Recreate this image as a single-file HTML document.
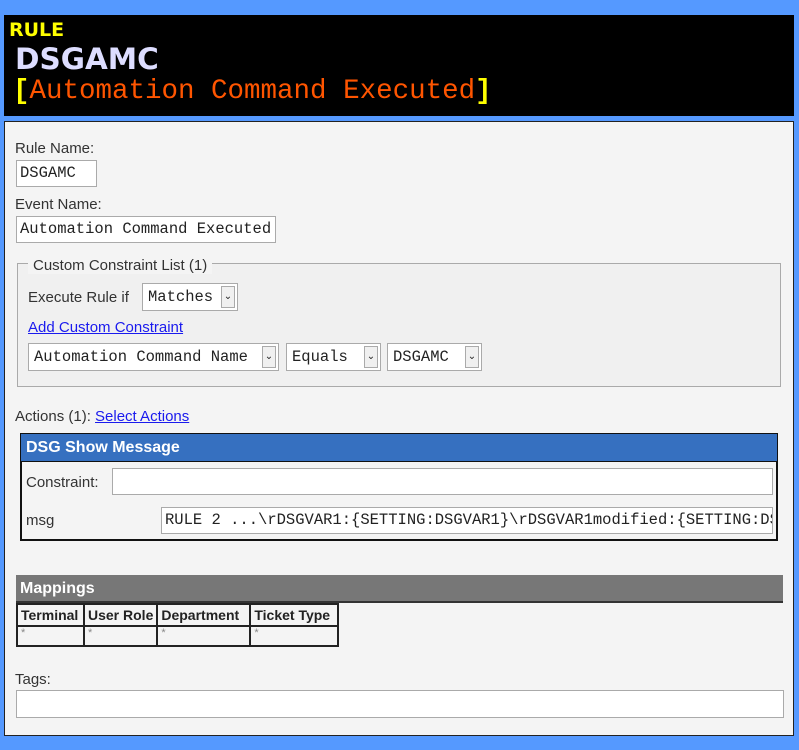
<!DOCTYPE html>
<html><head><style>
*{box-sizing:border-box;margin:0;padding:0}
body{width:799px;height:750px;background:#5599ff;position:relative;font-family:"Liberation Sans",sans-serif;color:#222;overflow:hidden}
.a{position:absolute}
.hdr{left:4px;top:15px;width:790px;height:101px;background:#000}
.pan{left:4px;top:121px;width:790px;height:615px;background:#f4f4f4;border:1px solid #222}
.lbl{font-size:15px;color:#333}
.in{background:#fff;border:1px solid #aaa;font-family:"Liberation Mono",monospace;font-size:15.5px;padding-left:3px;line-height:25px;white-space:nowrap;overflow:hidden;color:#222}
.sel{background:#fff;border:1px solid #aaa;font-family:"Liberation Mono",monospace;font-size:15.5px;padding-left:5px;line-height:26px;color:#222}
.sel i{position:absolute;right:2px;top:2px;width:14px;height:22px;border:1px solid #aaa;background:#f0f0f0;font-style:normal;font-family:"DejaVu Sans";font-size:10px;text-align:center;line-height:20px}
a{color:#1a1aee;text-decoration:underline}
td,th{border:2px solid #222;font-size:14px;padding:0 3px;height:22px;text-align:left;white-space:nowrap}
th{font-weight:bold}
td{color:#888;font-size:11px;height:20px;vertical-align:top}
</style></head><body>
<div class="a hdr"></div>
<div class="a" style="left:9px;top:19px;color:#ffff00;font-weight:bold;font-size:19px;font-family:'DejaVu Sans',sans-serif">RULE</div>
<div class="a" style="left:15px;top:42px;color:#ddddff;font-weight:bold;font-size:29.5px;font-family:'DejaVu Sans',sans-serif">DSGAMC</div>
<div class="a" style="left:13px;top:76px;font-family:'Liberation Mono',monospace;font-size:27.5px;color:#ff5500;white-space:nowrap"><b style="color:#ffff00">[</b>Automation Command Executed<b style="color:#ffff00">]</b></div>
<div class="a pan"></div>
<div class="a lbl" style="left:15px;top:140px">Rule Name:</div>
<div class="a in" style="left:16px;top:160px;width:81px;height:27px">DSGAMC</div>
<div class="a lbl" style="left:15px;top:196px">Event Name:</div>
<div class="a in" style="left:16px;top:216px;width:260px;height:27px">Automation Command Executed</div>
<div class="a" style="left:17px;top:263px;width:764px;height:124px;border:1px solid #aaa;background:#f0f0f0"></div>
<div class="a lbl" style="left:28px;top:257px;background:#f4f4f4;padding:0 5px">Custom Constraint List (1)</div>
<div class="a lbl" style="left:28px;top:289px">Execute Rule if</div>
<div class="a sel" style="left:142px;top:283px;width:96px;height:28px">Matches<i>&#8964;</i></div>
<div class="a lbl" style="left:28px;top:319px"><a>Add Custom Constraint</a></div>
<div class="a sel" style="left:28px;top:343px;width:251px;height:28px">Automation Command Name<i>&#8964;</i></div>
<div class="a sel" style="left:286px;top:343px;width:95px;height:28px">Equals<i>&#8964;</i></div>
<div class="a sel" style="left:387px;top:343px;width:95px;height:28px">DSGAMC<i>&#8964;</i></div>
<div class="a lbl" style="left:15px;top:408px">Actions (1): <a>Select Actions</a></div>
<div class="a" style="left:20px;top:433px;width:758px;height:108px;border:2px solid #111;background:#f4f4f4"></div>
<div class="a" style="left:21px;top:434px;width:756px;height:28px;background:#3670c0;border-bottom:1px solid #111;color:#fff;font-weight:bold;font-size:16px;padding:5px 0 0 5px">DSG Show Message</div>
<div class="a lbl" style="left:26px;top:474px">Constraint:</div>
<div class="a in" style="left:112px;top:468px;width:661px;height:27px"></div>
<div class="a lbl" style="left:26px;top:512px">msg</div>
<div class="a in" style="left:161px;top:507px;width:612px;height:27px">RULE 2 ...\rDSGVAR1:{SETTING:DSGVAR1}\rDSGVAR1modified:{SETTING:DSGVAR1}</div>
<div class="a" style="left:16px;top:575px;width:767px;height:28px;background:#777;border-bottom:2px solid #333;color:#fff;font-weight:bold;font-size:16px;padding:5px 0 0 4px">Mappings</div>
<table class="a" style="left:16px;top:603px;border-collapse:collapse">
<tr><th style="width:67px">Terminal</th><th style="width:73px">User Role</th><th style="width:93px">Department</th><th style="width:88px">Ticket Type</th></tr>
<tr><td>*</td><td>*</td><td>*</td><td>*</td></tr>
</table>
<div class="a lbl" style="left:15px;top:671px">Tags:</div>
<div class="a in" style="left:16px;top:690px;width:768px;height:28px"></div>
</body></html>
